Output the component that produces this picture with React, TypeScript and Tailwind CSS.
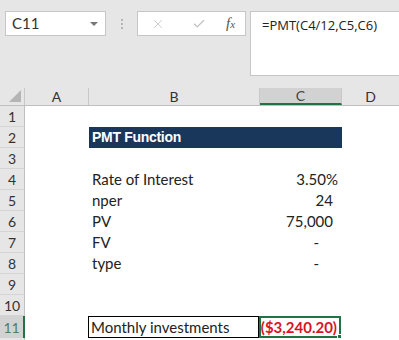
import { X, Check } from "lucide-react"

const rows = [
  { n: 1, label: "", value: "", pr: "" },
  { n: 2, label: "", value: "", pr: "" },
  { n: 3, label: "", value: "", pr: "" },
  { n: 4, label: "Rate of Interest", value: "3.50%", pr: "pr-[4px]" },
  { n: 5, label: "nper", value: "24", pr: "pr-[9px]" },
  { n: 6, label: "PV", value: "75,000", pr: "pr-[9px]" },
  { n: 7, label: "FV", value: "-", pr: "pr-[23px]" },
  { n: 8, label: "type", value: "-", pr: "pr-[23px]" },
  { n: 9, label: "", value: "", pr: "" },
  { n: 10, label: "", value: "", pr: "" },
]

const cellFont = "font-['Lato','Open_Sans',sans-serif]"

export default function App() {
  return (
    <div className={`w-[399px] h-[340px] overflow-hidden bg-[#e6e6e6] ${cellFont} text-[#222]`}>
      {/* formula bar */}
      <div className="flex h-[88px] pt-[11px]">
        <div className="ml-[5px] flex h-[25px] w-[101px] items-center justify-between border border-[#c6c6c6] bg-white pl-[6px] pr-[7px] text-[15px] text-[#333]">
          <span>C11</span>
          <span className="h-0 w-0 border-x-[4px] border-t-[4px] border-x-transparent border-t-[#777]" />
        </div>
        <div className="flex w-[31px] flex-col items-center gap-[2px] pt-[8px]">
          <span className="h-[2px] w-[2px] bg-[#b5b5b5]" />
          <span className="h-[2px] w-[2px] bg-[#b5b5b5]" />
          <span className="h-[2px] w-[2px] bg-[#b5b5b5]" />
        </div>
        <div className="flex h-[25px] w-[109px] items-center border border-[#c6c6c6] bg-white text-[#bdbdbd]">
          <X className="ml-[13px] h-[14px] w-[14px]" strokeWidth={1.3} />
          <Check className="ml-[27px] h-[14px] w-[14px]" strokeWidth={2} />
          <span className="ml-[20px] font-['Liberation_Serif',serif] text-[15px] italic text-[#555]">
            f<span className="text-[11px]">x</span>
          </span>
        </div>
        <div className="ml-[4px] h-[65px] flex-1 border border-r-0 border-[#c6c6c6] bg-white pl-[11px] pt-[4px] font-['Open_Sans',sans-serif] text-[13px] text-[#222]">
          =PMT(C4/12,C5,C6)
        </div>
      </div>

      {/* column headers */}
      <div className="flex h-[18px] border-b border-[#bfbfbf] text-[14px] text-[#333]">
        <div className="relative w-[25px] border-r border-[#c8c8c8]">
          <span className="absolute bottom-[3px] right-[3px] h-0 w-0 border-b-[12px] border-l-[12px] border-b-[#b4b4b4] border-l-transparent" />
        </div>
        <div className="flex w-[64px] items-center justify-center border-r border-[#c8c8c8]">A</div>
        <div className="flex w-[171px] items-center justify-center border-r border-[#c8c8c8]">B</div>
        <div className="flex w-[82px] items-center justify-center border-b-2 border-r border-b-[#217346] border-r-[#c8c8c8] bg-[#d2d2d2] text-[#444]">
          C
        </div>
        <div className="flex flex-1 items-center justify-center">D</div>
      </div>

      {/* grid */}
      <div className="bg-white text-[15px]">
        {rows.map((r) => (
          <div key={r.n} className="flex h-[21px]">
            <div className="flex w-[25px] items-center justify-center border-b border-r border-b-[#d4d4d4] border-r-[#bfbfbf] bg-[#e6e6e6] text-[14px] text-[#333]">
              {r.n}
            </div>
            <div className="w-[64px]" />
            {r.n === 2 ? (
              <div className="flex w-[253px] items-center bg-[#19375a] pl-[3px] font-['Liberation_Sans',sans-serif] text-[14px] font-bold tracking-[-0.3px] text-white">
                PMT Function
              </div>
            ) : (
              <>
                <div className="flex w-[171px] items-center pl-[3px]">{r.label}</div>
                <div className={`flex w-[82px] items-center justify-end ${r.pr}`}>{r.value}</div>
              </>
            )}
          </div>
        ))}
        <div className="flex h-[22px]">
          <div className="flex w-[25px] items-center justify-center border-r-2 border-[#217346] bg-[#d2d2d2] text-[14px] text-[#4f7f63]">
            11
          </div>
          <div className="w-[63px]" />
          <div className="flex w-[171px] items-center border border-black pl-[2px]">Monthly investments</div>
          <div className="relative flex w-[82px] items-center justify-end border-2 border-[#217346] pr-[2px] font-bold text-[#d9141e]">
            ($3,240.20)
            <span className="absolute -bottom-[3px] -right-[3px] h-[5px] w-[5px] border border-white bg-[#217346]" />
          </div>
        </div>
        <div className="flex h-[10px]">
          <div className="w-[25px] border-r border-[#bfbfbf] bg-[#e6e6e6]" />
        </div>
      </div>
    </div>
  )
}
